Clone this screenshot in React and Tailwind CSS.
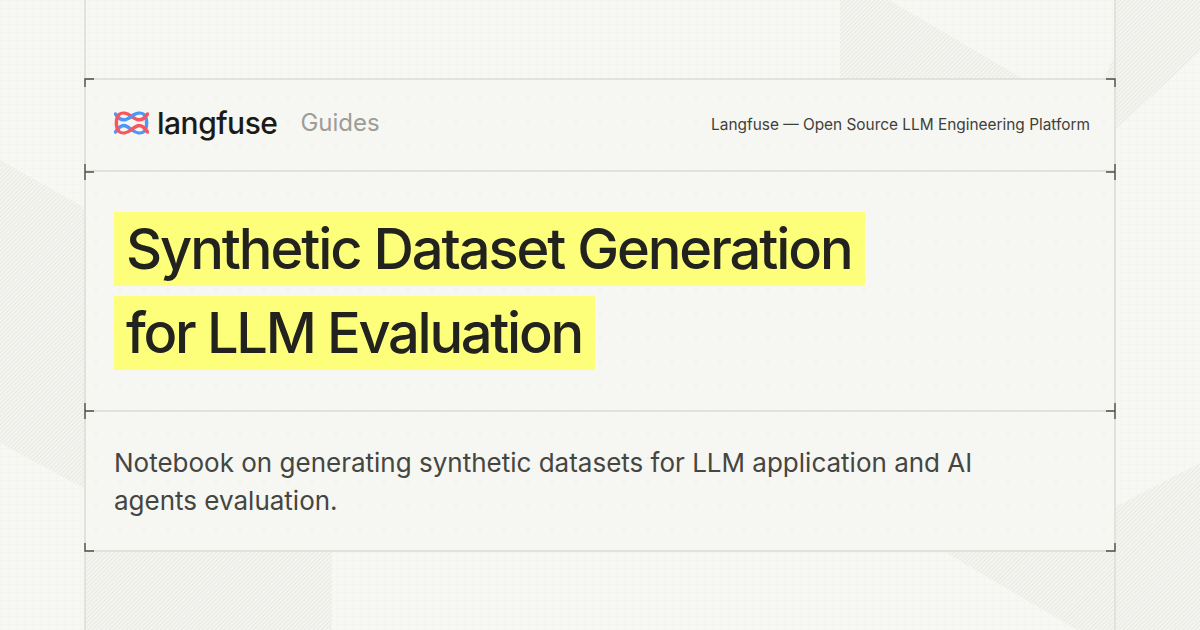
import React from "react";

function Backdrop() {
  return (
    <svg className="absolute inset-0" width="1200" height="630" viewBox="0 0 1200 630">
      <defs>
        <pattern id="hatch" width="3" height="3" patternUnits="userSpaceOnUse" patternTransform="rotate(45)">
          <rect width="3" height="3" fill="#f4f4f0" />
          <rect width="1" height="3" fill="#e9e9e4" />
        </pattern>
      </defs>
      <g fill="url(#hatch)">
        <polygon points="840,0 889,0 1022,78 840,78" />
        <polygon points="1104,78 1115,55 1115,78" />
        <polygon points="1115,0 1200,0 1200,52 1115,130" />
        <polygon points="0,160 85,208 85,489 0,443" />
        <polygon points="85,551 332,551 332,630 85,630" />
        <polygon points="943,551 1115,551 1115,630 1077,630" />
        <polygon points="1115,507 1200,463 1200,630 1115,630" />
      </g>
    </svg>
  );
}

// crosshair marks that sit over the panel border
function Mark({ className, d }) {
  return (
    <svg className={"absolute " + className} width="10" height="18" viewBox="0 0 10 18" fill="none" stroke="#4f4f4a">
      <path d={d} strokeWidth="1.4" />
    </svg>
  );
}

function Logo() {
  return (
    <svg width="35" height="24" viewBox="0 0 35 24" fill="none" strokeWidth="3.4" strokeLinecap="round">
      <path d="M1.5 3 C4 7 8 9.5 12 8.5 C15 7.5 16 6.5 18 5 C22 2 27 1 30 3.5 C33.5 7 33.5 17 30 20.5 C27 23 22 22 18 19 C15 16.5 13 15 10 14.5 C6 14.5 3.5 18 1.5 21" stroke="#4e96f7" />
      <path d="M33.5 3 C31 7 27 9.5 23 8.5 C20 7.5 19 6.5 17 5 C13 2 8 1 5 3.5 C1.5 7 1.5 17 5 20.5 C8 23 13 22 17 19 C20 16.5 22 15 25 14.5 C29 14.5 31.5 18 33.5 21" stroke="#f8565f" />
      <path d="M15.5 6.8 C16.5 6.2 17.5 5.4 19.5 4" stroke="#4e96f7" />
    </svg>
  );
}

export default function App() {
  const left = "left-[-2px]";
  const right = "right-[-2px]";
  return (
    <div className="relative h-[630px] w-[1200px] overflow-hidden bg-[#f7f7f3] bg-[linear-gradient(#f4f4f0_1px,transparent_1px),linear-gradient(90deg,#f4f4f0_1px,transparent_1px)] bg-[size:8px_8px] font-['Inter',sans-serif] text-[#22221f]">
      <Backdrop />

      <div className="relative mx-[84px] flex h-full flex-col justify-center border-x-2 border-[#e2e2dc]">
        <div className="relative bg-[#f6f6f2] bg-[radial-gradient(#eeeeea_1px,transparent_1.5px)] bg-[size:24px_24px] bg-[position:22px_8px]">
          <header className="flex h-[94px] items-center justify-between border-y-2 border-[#e2e2dc] pl-7 pr-6">
            <div className="flex items-center pb-1">
              <Logo />
              <span className="ml-2 text-[30px] font-medium leading-none tracking-[-0.5px] text-[#1a1a18]">langfuse</span>
              <span className="ml-[23px] text-[24px] leading-none text-[#9d9d97]">Guides</span>
            </div>
            <p className="text-[15.4px] text-[#3f3f3b]">Langfuse — Open Source LLM Engineering Platform</p>
          </header>

          <section className="flex h-[240px] flex-col gap-2.5 border-b-2 border-[#e2e2dc] pl-7 pt-[40px]">
            <h1 className="w-fit bg-[#fdff7b] pl-3 pr-[13px] text-[56px] font-medium leading-[74px] tracking-[-2.08px] text-[#22221f]">Synthetic Dataset Generation</h1>
            <h1 className="w-fit bg-[#fdff7b] pl-3 pr-[13px] text-[56px] font-medium leading-[74px] tracking-[-2.3px] text-[#22221f]">for LLM Evaluation</h1>
          </section>

          <section className="h-[140px] border-b-2 border-[#e2e2dc] pl-7 pr-[140px] pt-8">
            <p className="text-[26px] leading-[38px] text-[#454541]">Notebook on generating synthetic datasets for LLM application and AI agents evaluation.</p>
          </section>

          <Mark className={left + " top-0"} d="M1 9 V1 H10" />
          <Mark className={right + " top-0"} d="M0 1 H9 V9" />
          <Mark className={left + " top-[85px]"} d="M1 1 V17 M1 9 H10" />
          <Mark className={right + " top-[85px]"} d="M9 1 V17 M0 9 H9" />
          <Mark className={left + " top-[324px]"} d="M1 1 V17 M1 9 H10" />
          <Mark className={right + " top-[324px]"} d="M9 1 V17 M0 9 H9" />
          <Mark className={left + " bottom-0"} d="M1 9 V17 H10" />
          <Mark className={right + " bottom-0"} d="M0 17 H9 V9" />
        </div>
      </div>
    </div>
  );
}
